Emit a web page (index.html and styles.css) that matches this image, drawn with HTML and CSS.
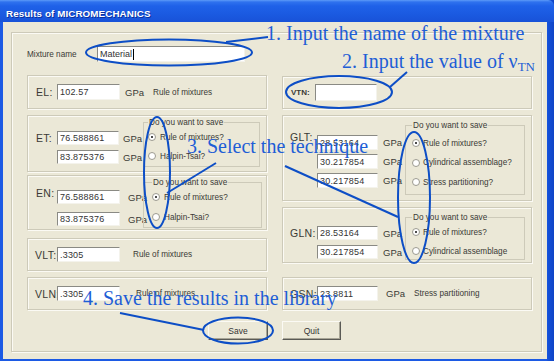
FILE: index.html
```html
<!DOCTYPE html>
<html>
<head>
<meta charset="utf-8">
<title>Results of MICROMECHANICS</title>
<link rel="stylesheet" href="styles.css">
</head>
<body>
<div class="window">
  <div class="titlebar">Results of MICROMECHANICS</div>
  <div class="frame">
    <div class="client">
      <div class="outer">
        <div class="name-row">
          <span class="stext name-lbl">Mixture name</span>
          <span class="field name-field">Material<span class="caret"></span></span>
        </div>
        <div class="cols">
          <div class="col col-left">
            <div class="group single g-el">
              <span class="lbl">EL:</span>
              <span class="field">102.57</span>
              <span class="unit">GPa</span>
              <span class="stext note">Rule of mixtures</span>
            </div>
            <div class="group multi g-et">
              <span class="lbl">ET:</span>
              <div class="fields">
                <div class="frow"><span class="field">76.588861</span><span class="unit">GPa</span></div>
                <div class="frow"><span class="field">83.875376</span><span class="unit">GPa</span></div>
              </div>
              <fieldset class="save">
                <legend class="stext">Do you want to save</legend>
                <div class="radios">
                  <div class="radio on"><i class="dot"></i><span class="stext">Rule of mixtures?</span></div>
                  <div class="radio"><i class="dot"></i><span class="stext">Halpin-Tsai?</span></div>
                </div>
              </fieldset>
            </div>
            <div class="group multi g-en">
              <span class="lbl">EN:</span>
              <div class="fields">
                <div class="frow"><span class="field">76.588861</span><span class="unit">GPa</span></div>
                <div class="frow"><span class="field">83.875376</span><span class="unit">GPa</span></div>
              </div>
              <fieldset class="save">
                <legend class="stext">Do you want to save</legend>
                <div class="radios">
                  <div class="radio on"><i class="dot"></i><span class="stext">Rule of mixtures?</span></div>
                  <div class="radio"><i class="dot"></i><span class="stext">Halpin-Tsai?</span></div>
                </div>
              </fieldset>
            </div>
            <div class="group single g-vlt">
              <span class="lbl">VLT:</span>
              <span class="field">.3305</span>
              <span class="stext note">Rule of mixtures</span>
            </div>
            <div class="group single g-vln">
              <span class="lbl">VLN:</span>
              <span class="field">.3305</span>
              <span class="stext note">Rule of mixtures</span>
            </div>
          </div>
          <div class="col col-right">
            <div class="group single g-vtn">
              <span class="lbl lbl-small">VTN:</span>
              <span class="field"></span>
            </div>
            <div class="group multi g-glt">
              <span class="lbl">GLT:</span>
              <div class="fields">
                <div class="frow"><span class="field">28.53164</span><span class="unit">GPa</span></div>
                <div class="frow"><span class="field">30.217854</span><span class="unit">GPa</span></div>
                <div class="frow"><span class="field">30.217854</span><span class="unit">GPa</span></div>
              </div>
              <fieldset class="save">
                <legend class="stext">Do you want to save</legend>
                <div class="radios">
                  <div class="radio on"><i class="dot"></i><span class="stext">Rule of mixtures?</span></div>
                  <div class="radio"><i class="dot"></i><span class="stext">Cylindrical assemblage?</span></div>
                  <div class="radio"><i class="dot"></i><span class="stext">Stress partitioning?</span></div>
                </div>
              </fieldset>
            </div>
            <div class="group multi g-gln">
              <span class="lbl">GLN:</span>
              <div class="fields">
                <div class="frow"><span class="field">28.53164</span><span class="unit">GPa</span></div>
                <div class="frow"><span class="field">30.217854</span><span class="unit">GPa</span></div>
              </div>
              <fieldset class="save">
                <legend class="stext">Do you want to save</legend>
                <div class="radios">
                  <div class="radio on"><i class="dot"></i><span class="stext">Rule of mixtures?</span></div>
                  <div class="radio"><i class="dot"></i><span class="stext">Cylindrical assemblage</span></div>
                </div>
              </fieldset>
            </div>
            <div class="group single g-gsn">
              <span class="lbl">GSN:</span>
              <span class="field">23.8811</span>
              <span class="unit">GPa</span>
              <span class="stext note">Stress partitioning</span>
            </div>
          </div>
        </div>
        <div class="buttons">
          <span class="btn btn-save">Save</span>
          <span class="btn btn-quit">Quit</span>
        </div>
      </div>
    </div>
  </div>
  <svg class="annot" width="554" height="361" viewBox="0 0 554 361">
    <g class="marks">
      <ellipse cx="169" cy="52.5" rx="83" ry="13"/>
      <line x1="226" y1="42" x2="268" y2="37"/>
      <ellipse cx="339" cy="92" rx="53" ry="16"/>
      <line x1="390" y1="87" x2="407" y2="72"/>
      <ellipse cx="157" cy="172.5" rx="13" ry="55.5"/>
      <line x1="167" y1="193" x2="216" y2="163"/>
      <ellipse cx="414" cy="197.5" rx="16" ry="65.5"/>
      <line x1="285" y1="166" x2="398" y2="217"/>
      <ellipse cx="238" cy="330.5" rx="35" ry="13"/>
      <line x1="120" y1="313" x2="204" y2="330"/>
    </g>
    <g class="notes">
      <text x="266" y="40">1. Input the name of the mixture</text>
      <text x="342" y="68">2. Input the value of ν<tspan class="sub" dy="3">TN</tspan></text>
      <text x="187" y="153">3. Select the technique</text>
      <text x="83" y="305">4. Save the results in the library</text>
    </g>
  </svg>
</div>
</body>
</html>
```

FILE: styles.css
```css
* { box-sizing: border-box; }
html, body { margin: 0; padding: 0; }
body {
  width: 554px;
  height: 361px;
  overflow: hidden;
  font-family: "Liberation Sans", Arial, sans-serif;
  background: #1a57e0;
}
.window {
  position: relative;
  width: 554px;
  height: 361px;
  display: flex;
  flex-direction: column;
  background: linear-gradient(90deg, #1c5ae4 0, #1c5ae4 546px, #1450d8 548px, #0f44c6 554px);
}
.titlebar {
  height: 22px;
  flex: none;
  display: flex;
  align-items: center;
  padding: 5px 0 0 6px;
  color: #fff;
  font-weight: bold;
  font-size: 9.8px;
  letter-spacing: 0.1px;
  text-shadow: 1px 1px 0 #0b2f9a;
  background: linear-gradient(#5d9bf8 0, #2f72ee 2px, #1f61e8 6px, #1b5be2 60%, #1852d8 100%);
  border-radius: 0 6px 0 0;
}
.frame {
  flex: 1;
  display: flex;
  padding: 0 7px 2px 3px;
}
.client {
  flex: 1;
  background: #ebe8d7;
  padding: 10px 0 0 8px;
}
.outer {
  width: 531px;
  height: 320px;
  border: 1px solid #cdcab9;
  box-shadow: inset 1px 1px 0 #fbfaf4, 1px 1px 0 #fbfaf4;
  padding: 13px 0 0 15px;
}
.stext {
  font-size: 8.2px;
  color: #3a3a36;
}
.name-row {
  display: flex;
  align-items: center;
  height: 16px;
}
.name-lbl { width: 70px; }
.field {
  display: flex;
  align-items: center;
  height: 14px;
  padding-left: 2px;
  background: #fff;
  border-top: 1px solid #8a8a84;
  border-left: 1px solid #8a8a84;
  border-right: 1px solid #f4f3ec;
  border-bottom: 1px solid #f4f3ec;
  font-size: 9px;
  letter-spacing: 0.2px;
  color: #333;
  white-space: nowrap;
  overflow: hidden;
}
.name-field { width: 148px; height: 16px; letter-spacing: 0; }
.caret {
  display: inline-block;
  width: 1px;
  height: 11px;
  background: #000;
  margin-left: 1px;
}
.cols {
  display: flex;
  gap: 15px;
  margin-top: 13px;
}
.col { display: flex; flex-direction: column; }
.col-left { width: 240px; }
.col-right { width: 250px; margin-top: 1px; }
.group {
  border: 1px solid #cdcab9;
  box-shadow: inset 1px 1px 0 #fbfaf4, 1px 1px 0 #fbfaf4;
}
.lbl {
  font-size: 10.5px;
  color: #3a3a36;
  letter-spacing: 0.3px;
  white-space: nowrap;
  flex: none;
}
.lbl-small { font-size: 8px; font-weight: bold; letter-spacing: 0; }
.unit {
  font-size: 9.5px;
  color: #3a3a36;
  flex: none;
}
.single {
  display: flex;
  align-items: center;
  padding-left: 8px;
}
.g-el { height: 34px; }
.g-el .lbl { width: 21px; }
.g-el .field { width: 63px; height: 16px; }
.g-el .unit { margin-left: 5px; width: 28px; }

.g-vlt { height: 33px; margin-top: 8px; padding-left: 7px; }
.g-vln { height: 33px; margin-top: 6px; padding-left: 7px; }
.g-vlt .lbl, .g-vln .lbl { width: 22px; }
.g-vlt .field, .g-vln .field { width: 63px; height: 15px; }
.g-vlt .note { margin-left: 13px; }
.g-vln .note { margin-left: 16px; }

.g-vtn { height: 33px; }
.g-vtn .lbl { width: 24px; }
.g-vtn .field { width: 62px; height: 17px; }

.g-gsn { height: 33px; margin-top: 14px; padding-left: 7px; }
.g-gsn .lbl { width: 27px; }
.g-gsn .field { width: 61px; height: 15px; }
.g-gsn .unit { margin-left: 8px; width: 28px; }

.multi {
  display: flex;
  align-items: flex-start;
  padding-left: 8px;
}
.multi .lbl {
  width: 21px;
  height: 14px;
  line-height: 14px;
  margin-top: var(--lt);
}
.multi .fields {
  display: flex;
  flex-direction: column;
  gap: var(--rg);
  padding-top: var(--ft);
}
.frow {
  display: flex;
  align-items: center;
  height: var(--rh);
}
.frow .field { width: 62px; height: var(--rh); }
.frow .unit { margin-left: 4px; width: 20px; }
.save {
  margin: var(--st) 0 0 0;
  padding: 0 0 0 var(--sp);
  height: var(--sh);
  width: var(--sw);
  min-width: 0;
  border: 1px solid #cdcab9;
}
.save legend {
  padding: 0 1px;
  line-height: 9px;
}
.radios {
  display: flex;
  flex-direction: column;
  gap: var(--rgap);
  padding-top: var(--rt);
}
.radio {
  display: flex;
  align-items: center;
  height: 14px;
  white-space: nowrap;
}
.dot {
  width: 8px;
  height: 8px;
  border-radius: 50%;
  background: #fff;
  border: 1px solid #9c9a90;
  margin-right: 4px;
  flex: none;
  display: flex;
  align-items: center;
  justify-content: center;
}
.radio.on .dot::after {
  content: "";
  width: 2px;
  height: 2px;
  border-radius: 50%;
  background: #111;
}
.g-et {
  height: 57px; margin-top: 6px;
  --lt: 15px; --ft: 15px; --rh: 14px; --rg: 5px;
  --st: 2px; --sh: 49px; --sw: 117px; --sp: 4px; --rt: 3px; --rgap: 5px;
}
.g-en {
  height: 55px; margin-top: 3px;
  --lt: 10px; --ft: 14px; --rh: 14px; --rg: 8px;
  --st: 2px; --sh: 50px; --sw: 119px; --sp: 8px; --rt: 3px; --rgap: 6px;
}
.g-en .frow .unit { margin-left: 8px; }
.g-en .frow .field { width: 63px; }
.g-en .fields { margin-right: -5px; }
.g-glt, .g-gln { padding-left: 7px; }
.g-glt .lbl, .g-gln .lbl { width: 27px; }
.g-glt .frow .field, .g-gln .frow .field { width: 61px; }
.g-glt .frow .unit, .g-gln .frow .unit { margin-left: 5px; width: 22px; }
.g-glt .dot, .g-gln .dot { margin-right: 3px; }
.g-glt {
  height: 86px; margin-top: 6px;
  --lt: 14px; --ft: 19px; --rh: 15px; --rg: 4px;
  --st: 5px; --sh: 74px; --sw: 120px; --sp: 6px; --rt: 6px; --rgap: 5.5px;
}
.g-gln {
  height: 56px; margin-top: 6px;
  --lt: 18px; --ft: 18px; --rh: 14px; --rg: 5px;
  --st: 4.5px; --sh: 47.5px; --sw: 120px; --sp: 6px; --rt: 3.5px; --rgap: 5px;
}
.buttons {
  display: flex;
  align-items: flex-start;
  gap: 14px;
  margin-top: 11px;
  padding-left: 181px;
}
.btn {
  display: flex;
  align-items: center;
  justify-content: center;
  height: 19px;
  font-size: 8.5px;
  color: #333;
  background: #ece9d8;
  border: 1px solid;
  border-color: #fbfaf4 #5a5a55 #5a5a55 #fbfaf4;
  box-shadow: inset -1px -1px 0 #a8a596;
}
.btn-save { width: 60px; }
.btn-quit { width: 59px; }
.annot {
  position: absolute;
  left: 0;
  top: 0;
  pointer-events: none;
}
.marks {
  fill: none;
  stroke: #0d4ec6;
  stroke-width: 2;
}
.notes {
  fill: #1e5ed6;
  font-family: "Liberation Serif", "Times New Roman", serif;
  font-size: 20px;
}
.notes .sub { font-size: 13px; }
```
